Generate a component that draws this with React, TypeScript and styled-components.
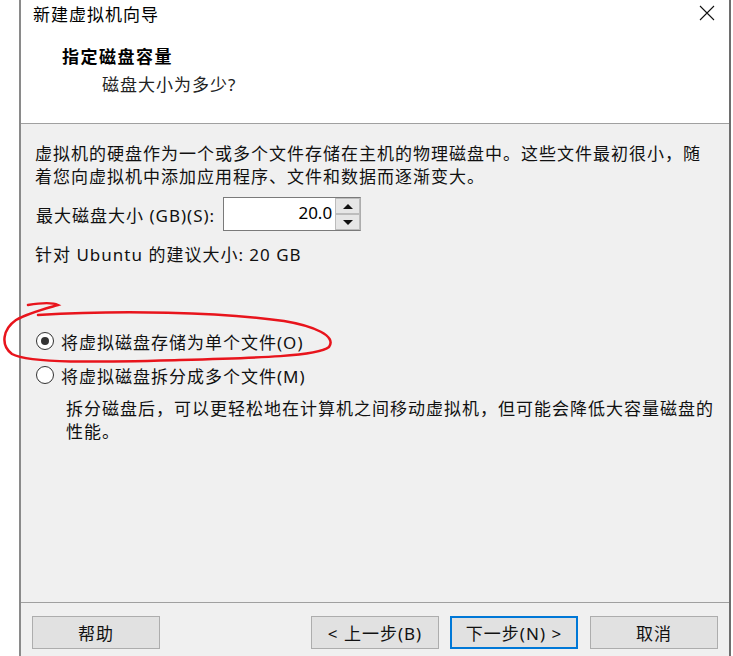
import styled, { createGlobalStyle } from 'styled-components';

const GlobalStyle = createGlobalStyle`
	html, body {
		margin: 0;
		padding: 0;
		background: #ffffff;
	}
	body {
		font-family: "Noto Sans", "Noto Sans CJK SC", sans-serif;
		font-size: 17px;
		letter-spacing: 1px;
		color: #111;
	}
`;

const Page = styled.div`
	position: relative;
	width: 733px;
	height: 656px;
	overflow: hidden;
`;

const Window = styled.div`
	margin-left: 19px;
	width: 712px;
	height: 656px;
	box-sizing: border-box;
	border-left: 2px solid #8a8a8a;
	border-right: 2px solid #6e6e6e;
	display: flex;
	flex-direction: column;
	background: #f0f0f0;
`;

const Header = styled.div`
	height: 124px;
	box-sizing: border-box;
	background: #fff;
	border-bottom: 1px solid #a0a0a0;
	display: flex;
	flex-direction: column;
`;

const TitleBar = styled.div`
	height: 26px;
	display: flex;
	align-items: center;
	justify-content: space-between;
	padding: 0 12px 0 12px;
	color: #000;
`;

const CloseButton = styled.div`
	width: 18px;
	height: 18px;
	display: flex;
	align-items: center;
	justify-content: center;
	margin-right: 1px;
`;

const StepTitle = styled.div`
	margin: 19px 0 0 41px;
	line-height: 24px;
	font-weight: 700;
	letter-spacing: 1.5px;
	color: #000;
`;

const StepSubtitle = styled.div`
	margin: 4px 0 0 81px;
	line-height: 24px;
	color: #222;
`;

const Body = styled.div`
	flex: 1;
	display: flex;
	flex-direction: column;
	padding: 0 14px;
`;

const Paragraph = styled.p<{ $top: number; $indent?: number }>`
	margin: ${(p) => p.$top}px 0 0 ${(p) => p.$indent ?? 0}px;
	line-height: 23px;
`;

const SizeRow = styled.div`
	margin-top: 9px;
	display: flex;
	align-items: center;
	gap: 8px;
	padding-left: 1px;
`;

const SpinBox = styled.div`
	width: 138px;
	height: 34px;
	box-sizing: border-box;
	border: 1px solid #7a7a7a;
	border-right-color: #adadad;
	background: #fff;
	display: flex;
`;

const SpinValue = styled.div`
	flex: 1;
	text-align: right;
	padding-right: 3px;
	line-height: 30px;
	letter-spacing: 0;
	color: #000;
`;

const SpinButtons = styled.div`
	width: 25px;
	display: flex;
	flex-direction: column;
`;

const SpinButton = styled.div`
	flex: 1;
	background: #e6e6e6;
	border: 1px solid #bcbcbc;
	display: flex;
	align-items: center;
	justify-content: center;
`;

const Arrow = styled.div<{ $down?: boolean }>`
	width: 0;
	height: 0;
	border-left: 5px solid transparent;
	border-right: 5px solid transparent;
	${(p) =>
		p.$down ? 'border-top: 5px solid #111;' : 'border-bottom: 5px solid #111;'}
`;

const RadioRow = styled.label<{ $top: number }>`
	margin-top: ${(p) => p.$top}px;
	height: 24px;
	display: flex;
	align-items: center;
	gap: 7px;
	padding-left: 1px;
`;

const RadioCircle = styled.span<{ $checked?: boolean }>`
	width: 18px;
	height: 18px;
	box-sizing: border-box;
	border: 1px solid #333;
	border-radius: 50%;
	background: #fff;
	display: flex;
	align-items: center;
	justify-content: center;
	&::after {
		content: '';
		width: 8px;
		height: 8px;
		border-radius: 50%;
		background: ${(p) => (p.$checked ? '#333' : 'transparent')};
	}
`;

const Footer = styled.div`
	height: 54px;
	flex-shrink: 0;
	box-sizing: border-box;
	border-top: 1px solid #a0a0a0;
	display: flex;
	align-items: flex-start;
	padding: 13px 11px 0 11px;
`;

const Spacer = styled.div`
	flex: 1;
`;

const Button = styled.button<{ $primary?: boolean; $gap?: number }>`
	width: 128px;
	height: 33px;
	margin-left: ${(p) => p.$gap ?? 0}px;
	box-sizing: border-box;
	background: #e1e1e1;
	border: ${(p) => (p.$primary ? '2px solid #0078d7' : '1px solid #adadad')};
	font-family: inherit;
	font-size: 17px;
	letter-spacing: 1px;
	color: #111;
	padding: 0;
`;

const Annotation = styled.svg`
	position: absolute;
	left: 0;
	top: 0;
	pointer-events: none;
`;

export default function App() {
	return (
		<Page>
			<GlobalStyle />
			<Window>
				<Header>
					<TitleBar>
						<span>新建虚拟机向导</span>
						<CloseButton>
							<svg width="16" height="16" viewBox="0 0 16 16">
								<path d="M1 1 L15 15 M15 1 L1 15" stroke="#111" strokeWidth="1.1" />
							</svg>
						</CloseButton>
					</TitleBar>
					<StepTitle>指定磁盘容量</StepTitle>
					<StepSubtitle>磁盘大小为多少?</StepSubtitle>
				</Header>

				<Body>
					<Paragraph $top={18}>
						虚拟机的硬盘作为一个或多个文件存储在主机的物理磁盘中。这些文件最初很小，随着您向虚拟机中添加应用程序、文件和数据而逐渐变大。
					</Paragraph>

					<SizeRow>
						<span>最大磁盘大小 (GB)(S):</span>
						<SpinBox>
							<SpinValue>20.0</SpinValue>
							<SpinButtons>
								<SpinButton>
									<Arrow />
								</SpinButton>
								<SpinButton>
									<Arrow $down />
								</SpinButton>
							</SpinButtons>
						</SpinBox>
					</SizeRow>

					<Paragraph $top={12}>针对 Ubuntu 的建议大小: 20 GB</Paragraph>

					<RadioRow $top={63}>
						<RadioCircle $checked />
						<span>将虚拟磁盘存储为单个文件(O)</span>
					</RadioRow>
					<RadioRow $top={10}>
						<RadioCircle />
						<span>将虚拟磁盘拆分成多个文件(M)</span>
					</RadioRow>

					<Paragraph $top={10} $indent={31}>
						拆分磁盘后，可以更轻松地在计算机之间移动虚拟机，但可能会降低大容量磁盘的性能。
					</Paragraph>
				</Body>

				<Footer>
					<Button>帮助</Button>
					<Spacer />
					<Button>&lt; 上一步(B)</Button>
					<Button $primary $gap={11}>
						下一步(N) &gt;
					</Button>
					<Button $gap={12}>取消</Button>
				</Footer>
			</Window>

			<Annotation width="733" height="656" viewBox="0 0 733 656">
				<path
					d="M28 305 C40 303 52 302 58 305 C44 309 28 313 16 320 C3 329 0 345 12 354 C30 364 100 362 180 360 C260 358 318 356 329 347 C337 336 314 326 284 321 C220 312 120 310 38 315"
					fill="none"
					stroke="#e8141c"
					strokeWidth="2.5"
					strokeLinecap="round"
				/>
			</Annotation>
		</Page>
	);
}
